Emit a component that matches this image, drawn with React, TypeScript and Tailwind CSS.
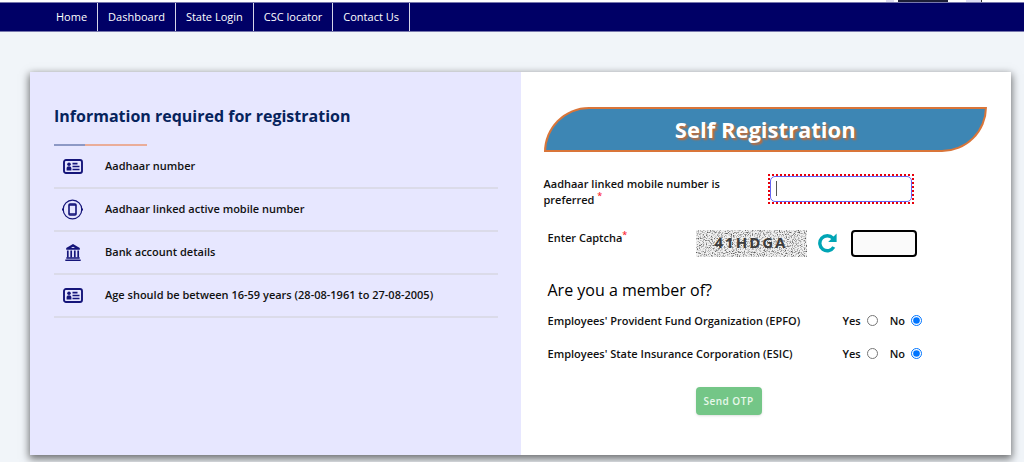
import { useState } from "react";

const navItems = ["Home", "Dashboard", "State Login", "CSC locator", "Contact Us"];

function IdCardIcon() {
  return (
    <svg className="h-[15px] w-5" viewBox="0 0 20 15" fill="none" aria-hidden="true">
      <rect x="1" y="1" width="18" height="13" rx="2" stroke="#15157a" strokeWidth="1.9" />
      <circle cx="6" cy="5.3" r="1.8" fill="#15157a" />
      <path d="M3.6 11.6V9Q3.6 7.3 6 7.3Q8.4 7.3 8.4 9V11.6Z" fill="#15157a" />
      <path d="M9.5 4.6H14.5M9.5 7.5H16.5M9.5 10.5H16.5" stroke="#15157a" strokeWidth="1.6" />
    </svg>
  );
}

function PhoneIcon() {
  return (
    <svg className="h-[21px] w-[21px]" viewBox="0 0 21 21" fill="none" stroke="#15157a" aria-hidden="true">
      <circle cx="10.5" cy="10.5" r="9.3" strokeWidth="1.2" />
      <rect x="7" y="5" width="7" height="11" rx="1" strokeWidth="1.6" />
      <path d="M7 6H14M7 14.8H14" strokeWidth="1.3" />
      <path d="M0 10.5H2M19 10.5H21" strokeWidth="1.8" />
    </svg>
  );
}

function BankIcon() {
  return (
    <svg className="h-[17px] w-4" viewBox="0 0 16 17" fill="none" aria-hidden="true">
      <path d="M8 0L14.8 4V5.8H1.2V4Z" fill="#15157a" />
      <path d="M6 4L8 2.8L10 4Z" fill="#e7e7ff" />
      <path d="M2.8 6.5V13.5M6.2 6.5V13.5M9.8 6.5V13.5M13.2 6.5V13.5" stroke="#15157a" strokeWidth="1.7" />
      <path d="M1.3 14H14.7M0.3 16.2H15.7" stroke="#15157a" strokeWidth="1.4" />
    </svg>
  );
}

function RefreshIcon() {
  return (
    <svg className="h-5 w-5" viewBox="0 0 20 20" fill="none" aria-hidden="true">
      <path d="M15.9 5.2A7.5 7.5 0 1 0 16.8 14" stroke="#00a5b5" strokeWidth="3.4" />
      <path d="M19.6 0.6V8.9H11.2Z" fill="#00a5b5" />
    </svg>
  );
}

function Captcha() {
  return (
    <svg className="h-[27px] w-[111px]" viewBox="0 0 111 27" role="img" aria-label="Captcha">
      <filter id="speckle" x="0" y="0" width="100%" height="100%" colorInterpolationFilters="sRGB">
        <feTurbulence type="fractalNoise" baseFrequency="0.85" numOctaves="2" seed="8" />
        <feColorMatrix values="3 0 0 0 -0.6  3 0 0 0 -0.6  3 0 0 0 -0.6  0 0 0 0 1" />
      </filter>
      <rect width="111" height="27" fill="#dddddd" />
      <rect width="111" height="27" filter="url(#speckle)" opacity="0.6" />
      <text x="55" y="18" textAnchor="middle" className="fill-[#3c3c3c] font-['Open_Sans',sans-serif] text-[15px] font-bold tracking-[2px]">
        41HDGA
      </text>
    </svg>
  );
}

const requirements = [
  { icon: <IdCardIcon />, text: "Aadhaar number" },
  { icon: <PhoneIcon />, text: "Aadhaar linked active mobile number" },
  { icon: <BankIcon />, text: "Bank account details" },
  { icon: <IdCardIcon />, text: "Age should be between 16-59 years (28-08-1961 to 27-08-2005)" },
];

function MemberRow({ name, label }: { name: string; label: string }) {
  const [value, setValue] = useState("No");
  return (
    <div role="radiogroup" aria-labelledby={name} className="flex h-[33px] items-center">
      <span id={name} className="w-[295px] shrink-0">{label}</span>
      <div className="flex gap-3">
        {["Yes", "No"].map((option) => (
          <label key={option} className="flex items-center gap-[6px]">
            {option}
            <input
              type="radio"
              name={name}
              checked={value === option}
              onChange={() => setValue(option)}
              className="h-[11px] w-[11px] accent-[#0075ff]"
            />
          </label>
        ))}
      </div>
    </div>
  );
}

export default function App() {
  return (
    <div className="min-h-screen bg-[#f1f5f9] font-['Open_Sans',sans-serif] text-[11px] font-semibold leading-4 text-[#111111]">
      <div className="flex h-[2px] justify-end overflow-hidden bg-white pr-[42px]">
        <span className="mr-1 w-2 bg-[#dddcef]" />
        <span className="w-[50px] bg-[#1c1d36]" />
        <span className="ml-[18px] w-4 border-r border-[#333333] bg-[#dcdcf3]" />
      </div>
      <nav className="flex h-[30px] border-y border-[#7777ad] bg-[#000066] pl-[46px] font-normal text-white">
        {navItems.map((item) => (
          <a key={item} href="#" className="flex items-center border-r border-[#d5d5e8] px-[10px]">
            {item}
          </a>
        ))}
      </nav>

      <main className="pt-10 pr-[13px] pb-[7px] pl-[30px]">
        <div className="grid min-h-[383px] grid-cols-2 bg-white shadow-[0_3px_8px_1px_rgba(0,0,0,0.55)]">
          <section className="bg-[#e7e7ff] pt-8 pr-[23px] pl-6">
            <h2 className="text-[16px] font-bold leading-6 text-[#06235c]">Information required for registration</h2>
            <div className="mt-4 flex h-[2px]">
              <span className="w-[31px] bg-[#8d99c5]" />
              <span className="w-[62px] bg-[#eaad99]" />
            </div>
            <ul>
              {requirements.map(({ icon, text }) => (
                <li key={text} className="flex h-[43px] items-center border-b-2 border-[#dbdbe9]">
                  <span className="mr-[14px] flex w-[37px] justify-center">{icon}</span>
                  <span className="pb-[2px]">{text}</span>
                </li>
              ))}
            </ul>
          </section>

          <form className="pt-[35px] pr-6 pl-[23px]" onSubmit={(event) => event.preventDefault()}>
            <h1 className="flex h-[45px] items-center justify-center rounded-tl-[45px] rounded-br-[45px] border-2 border-[#d97539] bg-[#3d86b4] pb-[2px] text-[22px] font-bold leading-none text-white [text-shadow:2px_2px_2px_#c46b36]">
              Self Registration
            </h1>

            <div className="mt-[22px] flex h-[30px] items-center">
              <label htmlFor="mobile" className="mr-11 w-[180px] pt-[5px]">
                Aadhaar linked mobile number is preferred <sup className="text-[9px] leading-none text-red-500">*</sup>
              </label>
              <div className="relative border-2 border-dotted border-red-600">
                <input
                  id="mobile"
                  type="text"
                  className="block h-[26px] w-[142px] rounded-[5px] border border-[#6464f5] px-[6px] outline-none"
                />
                <span aria-hidden="true" className="absolute top-[5px] left-[6px] h-[15px] w-px bg-[#555555]" />
              </div>
            </div>

            <div className="mt-[25px] ml-1 flex h-7 items-center">
              <label htmlFor="captcha" className="w-[148px] self-start pt-px">
                Enter Captcha<sup className="text-[9px] leading-none text-red-500">*</sup>
              </label>
              <Captcha />
              <button type="button" aria-label="Refresh captcha" className="mr-[14px] ml-[10px]">
                <RefreshIcon />
              </button>
              <input id="captcha" type="text" className="h-[27px] w-[66px] rounded-[4px] border-2 border-black bg-[#fafafa] px-2" />
            </div>

            <div className="mt-[21px] ml-1">
              <h2 className="mb-[2px] text-[16px] font-medium leading-6 text-black">Are you a member of?</h2>
              <MemberRow name="epfo" label="Employees' Provident Fund Organization (EPFO)" />
              <MemberRow name="esic" label="Employees' State Insurance Corporation (ESIC)" />
              <button
                type="submit"
                className="mt-[17px] ml-[148px] block h-7 w-[66px] rounded-[4px] bg-[#74c687] text-[10px] font-semibold tracking-[0.5px] whitespace-nowrap text-[#e8f8eb] shadow-sm"
              >
                Send OTP
              </button>
            </div>
          </form>
        </div>
      </main>
    </div>
  );
}
